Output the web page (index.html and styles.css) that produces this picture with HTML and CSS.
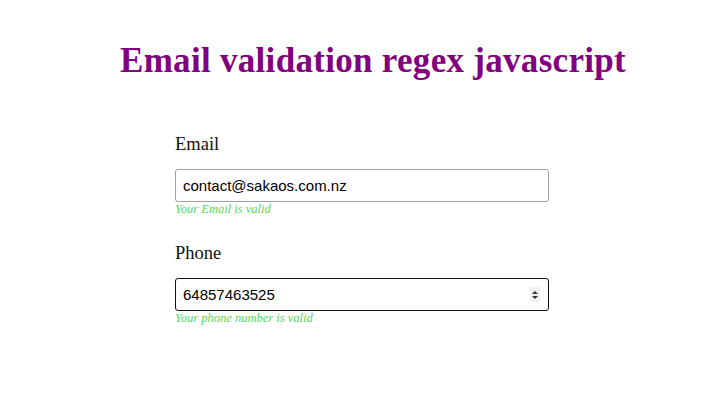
FILE: index.html
```html
<!DOCTYPE html>
<html>
<head>
<meta charset="utf-8">
<link rel="stylesheet" href="styles.css">
</head>
<body>
<h1 class="title">Email validation regex javascript</h1>
<form class="form">
  <div class="group">
    <label class="label">Email</label>
    <div class="field">
      <input class="input" type="text" value="contact@sakaos.com.nz">
    </div>
    <div class="valid">Your Email is valid</div>
  </div>
  <div class="group">
    <label class="label">Phone</label>
    <div class="field field-focus">
      <input class="input" type="text" value="64857463525">
      <span class="spin"><span class="up"></span><span class="down"></span></span>
    </div>
    <div class="valid">Your phone number is valid</div>
  </div>
</form>
</body>
</html>
```
FILE: styles.css
```css
html, body {
  margin: 0;
  padding: 0;
  background: #ffffff;
}
body {
  width: 720px;
  height: 404px;
  overflow: hidden;
  font-family: "Liberation Serif", "Times New Roman", serif;
}
.title {
  margin: 41px 0 0 26px;
  text-align: center;
  font-family: "Liberation Serif", serif;
  font-weight: bold;
  font-size: 35px;
  line-height: 40px;
  color: #800080;
  letter-spacing: 0.3px;
}
.form {
  margin: 49px 0 0 175px;
  width: 374px;
}
.group {
  display: flex;
  flex-direction: column;
}
.group + .group {
  margin-top: 25px;
}
.label {
  padding-top: 2px;
  font-size: 18.5px;
  line-height: 24px;
  color: #111;
}
.field {
  margin-top: 13px;
  height: 33px;
  box-sizing: border-box;
  border: 1px solid #a0a0a0;
  border-radius: 3px;
  display: flex;
  align-items: center;
  background: #fff;
}
.field-focus {
  border: 1.5px solid #111;
}
.input {
  flex: 1;
  border: 0;
  outline: none;
  padding: 0 0 0 7px;
  margin: 0;
  font-family: "Liberation Sans", Arial, sans-serif;
  font-size: 15px;
  color: #000;
  background: transparent;
  min-width: 0;
}
.spin {
  width: 10px;
  height: 15px;
  margin-right: 8px;
  background: #f0f0f0;
  display: flex;
  flex-direction: column;
  align-items: center;
  justify-content: center;
  gap: 2px;
}
.up, .down {
  width: 0;
  height: 0;
  border-left: 3px solid transparent;
  border-right: 3px solid transparent;
}
.up {
  border-bottom: 3px solid #333;
}
.down {
  border-top: 3px solid #333;
}
.valid {
  margin-top: 2px;
  font-style: italic;
  font-size: 12.5px;
  line-height: 10px;
  height: 10px;
  color: #57d957;
}
```
